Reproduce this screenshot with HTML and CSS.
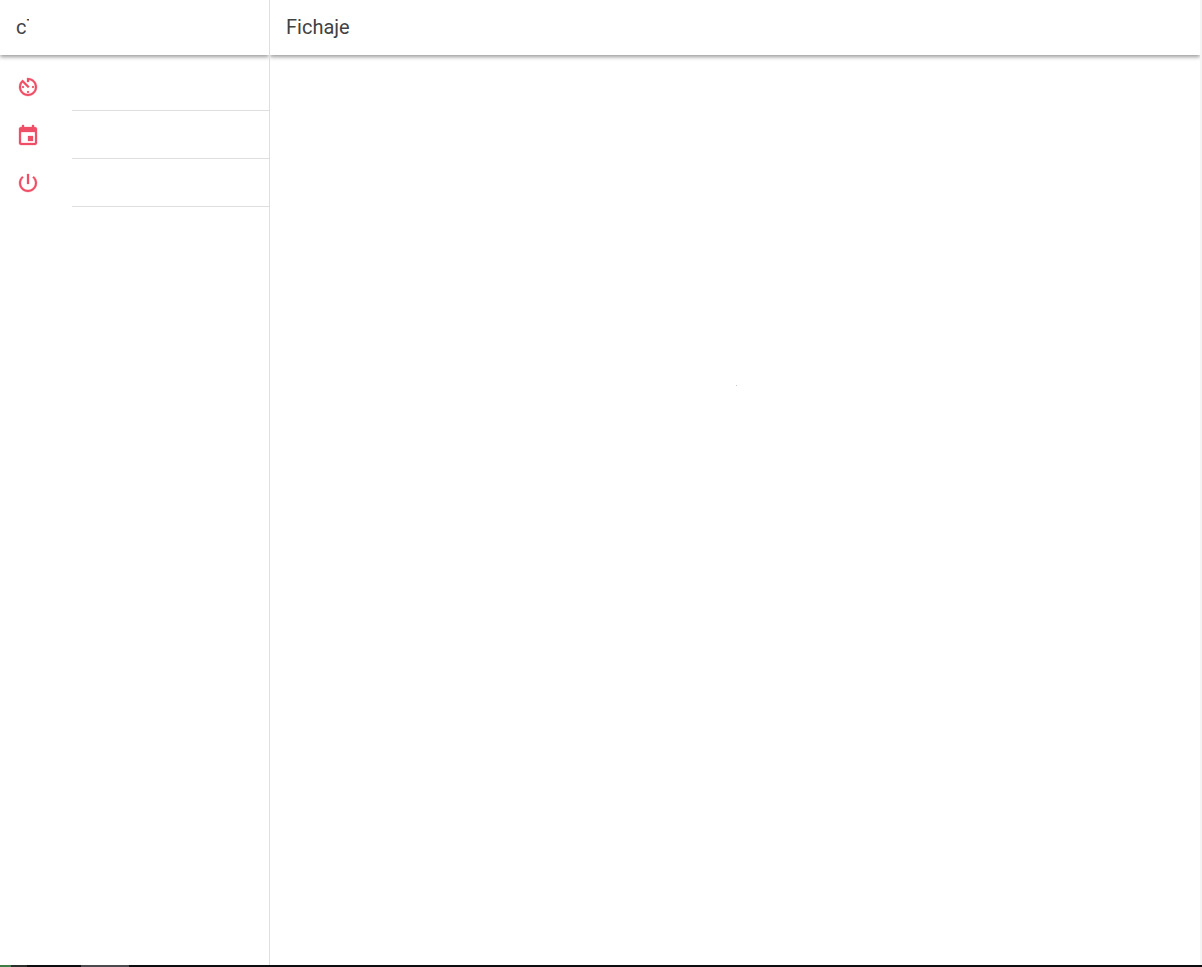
FILE: index.html
```html
<!DOCTYPE html>
<html lang="es">
<head>
<meta charset="utf-8">
<title>Fichaje</title>
<link rel="stylesheet" href="styles.css">
</head>
<body>
<div class="app">
  <div class="viewport">
    <aside class="menu">
      <header class="menu-header">
        <div class="menu-title">cT</div>
      </header>
      <ul class="menu-list">
        <li class="menu-item">
          <svg class="menu-icon" viewBox="0 0 24 24"><path d="M11 17c0 .55.45 1 1 1s1-.45 1-1-.45-1-1-1-1 .45-1 1zm0-14v4h2V5.08c3.39.49 6 3.39 6 6.92 0 3.87-3.13 7-7 7s-7-3.13-7-7c0-1.68.59-3.22 1.58-4.42L12 13l1.41-1.41-6.8-6.8v.02C4.42 6.45 3 9.05 3 12c0 4.97 4.02 9 8.99 9C16.97 21 21 16.97 21 12s-4.03-9-9.01-9H11zm7 9c0-.55-.45-1-1-1s-1 .45-1 1 .45 1 1 1 1-.45 1-1zM6 12c0 .55.45 1 1 1s1-.45 1-1-.45-1-1-1-1 .45-1 1z"/></svg>
          <span class="menu-line"></span>
        </li>
        <li class="menu-item">
          <svg class="menu-icon" viewBox="0 -1 24 24"><path d="M17 12h-5v5h5v-5zM16 1v2H8V1H6v2H5c-1.11 0-1.99.9-1.99 2L3 19c0 1.1.89 2 2 2h14c1.1 0 2-.9 2-2V5c0-1.1-.9-2-2-2h-1V1h-2zm3 18H5V8h14v11z"/></svg>
          <span class="menu-line"></span>
        </li>
        <li class="menu-item">
          <svg class="menu-icon" viewBox="0 0 24 24"><path d="M13 3h-2v10h2V3zm4.83 2.17l-1.42 1.42C17.99 7.86 19 9.81 19 12c0 3.87-3.13 7-7 7s-7-3.13-7-7c0-2.19 1.01-4.14 2.58-5.42L6.17 5.17C4.23 6.82 3 9.26 3 12c0 4.97 4.03 9 9 9s9-4.03 9-9c0-2.74-1.23-5.18-3.17-6.83z"/></svg>
          <span class="menu-line"></span>
        </li>
      </ul>
    </aside>
    <main class="page">
      <header class="page-header">
        <h1 class="page-title">Fichaje</h1>
      </header>
      <div class="page-content">
        <span class="speck"></span>
      </div>
    </main>
    <div class="edge"></div>
  </div>
  <footer class="taskbar">
    <span class="task task-green"></span>
    <span class="task task-dark"></span>
    <span class="task-gap"></span>
    <span class="task task-grey"></span>
  </footer>
</div>
</body>
</html>
```
FILE: styles.css
```css
* {
  box-sizing: border-box;
}

html,
body {
  margin: 0;
  height: 100%;
  overflow: hidden;
  background: #fff;
  font-family: Roboto, "Liberation Sans", sans-serif;
}

.app {
  display: flex;
  flex-direction: column;
  height: 100%;
}

.viewport {
  display: flex;
  flex: 1;
  min-height: 0;
}

.menu {
  display: flex;
  flex-direction: column;
  width: 270px;
  border-right: 1px solid #dedede;
}

.menu-header,
.page-header {
  position: relative;
  display: flex;
  align-items: center;
  height: 55px;
  padding: 0 0 2px 16px;
  background: #fff;
  box-shadow: 0 2px 4px rgba(0, 0, 0, 0.4);
  clip-path: inset(0 0 -10px 0);
}

.menu-title {
  width: 13px;
  overflow: hidden;
  white-space: nowrap;
  font-size: 20px;
  font-weight: 400;
  line-height: 24px;
  color: #424242;
}

.menu-list {
  margin: 0;
  padding: 8px 0 0;
  list-style: none;
}

.menu-item {
  display: flex;
  align-items: center;
  height: 48px;
  padding-left: 16px;
}

.menu-icon {
  flex: none;
  width: 24px;
  height: 24px;
  fill: #ee4f66;
  stroke: #ee4f66;
  stroke-width: 0.3;
}

.menu-line {
  align-self: flex-end;
  flex: 1;
  height: 1px;
  margin-left: 32px;
  background: #dedede;
}

.page {
  display: flex;
  flex: 1;
  flex-direction: column;
  min-width: 0;
}

.page-title {
  margin: 0;
  font-size: 20px;
  font-weight: 400;
  line-height: 24px;
  color: #424242;
}

.page-content {
  position: relative;
  flex: 1;
}

.speck {
  position: absolute;
  left: 466px;
  top: 330px;
  width: 1px;
  height: 1px;
  background: #c8c8c8;
}

.edge {
  flex: none;
  width: 2px;
  background: #f4f4f4;
}

.taskbar {
  display: flex;
  flex: none;
  height: 2px;
  background: #0b0d0e;
}

.task-green {
  width: 11px;
  background: #3f7d45;
}

.task-dark {
  width: 16px;
  background: #2a2f2c;
}

.task-gap {
  width: 54px;
}

.task-grey {
  width: 48px;
  background: #4a4a4e;
}
```
